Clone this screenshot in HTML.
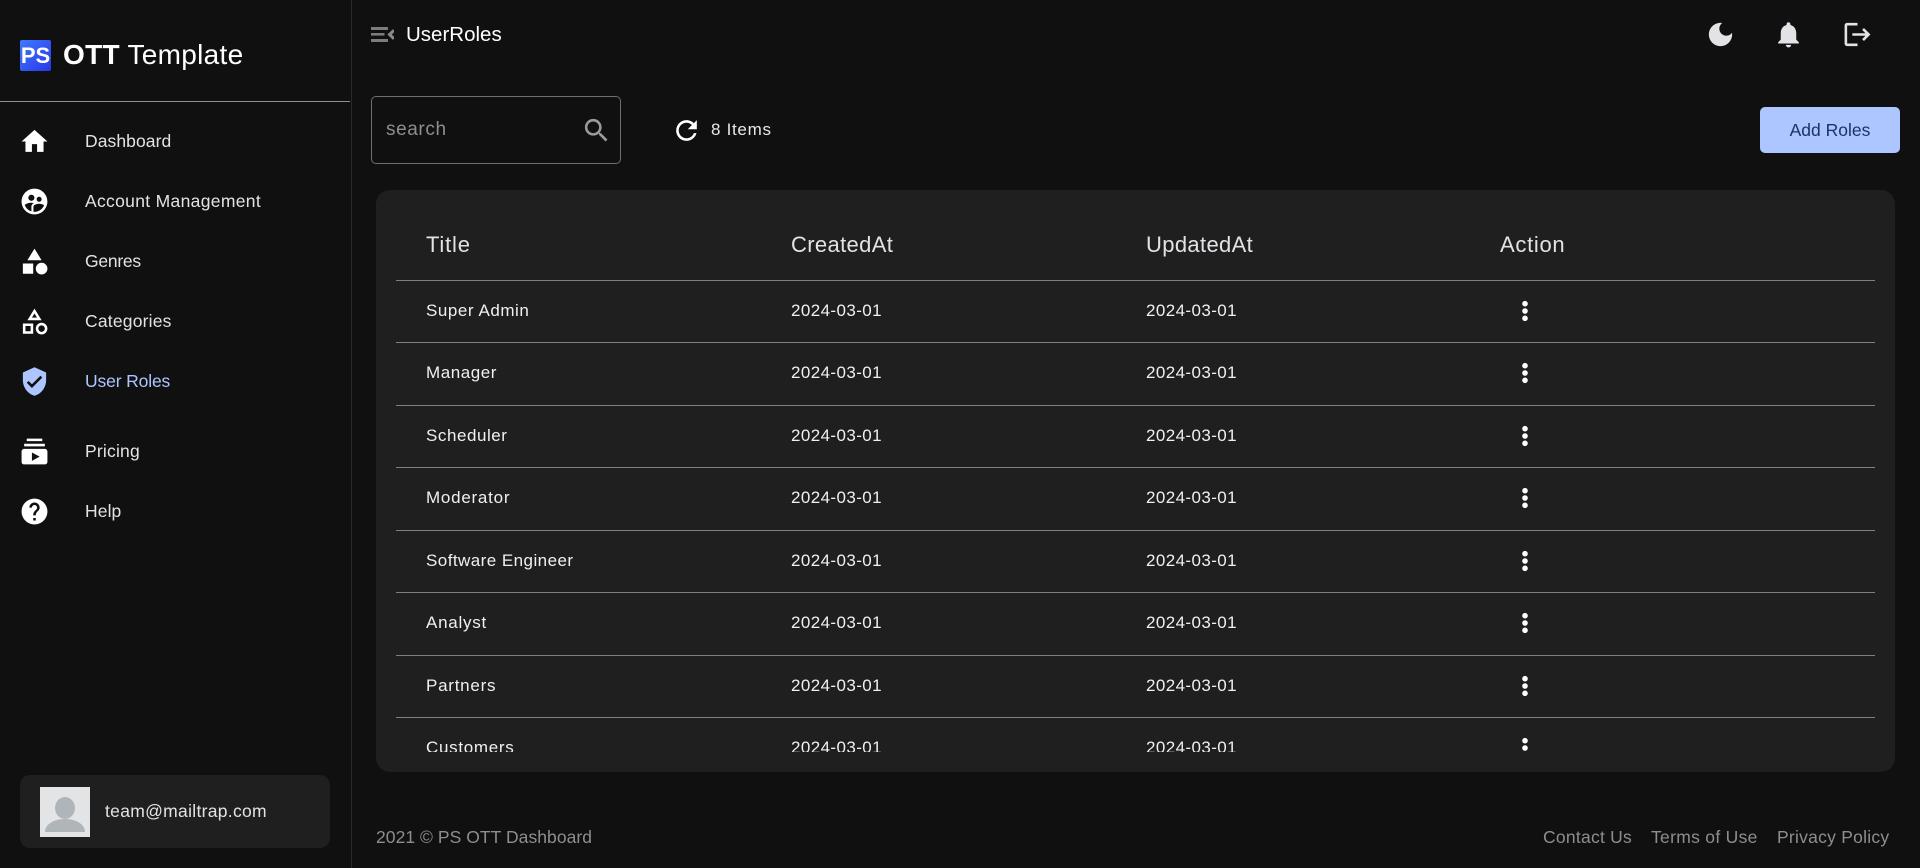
<!DOCTYPE html>
<html lang="en"><head><meta charset="utf-8"><title>UserRoles</title>
<style>
*{box-sizing:border-box}
html,body{margin:0;padding:0;width:1920px;height:868px;overflow:hidden;background:#101010;font-family:"Liberation Sans",sans-serif;color:#fff}
.a{position:absolute;white-space:nowrap}
svg{position:absolute;display:block}
.m{left:85px;font-size:17.5px;letter-spacing:.2px;line-height:24px;color:#e3e2e6}
.h{font-size:22px;letter-spacing:.35px;line-height:26px;color:#e3e2e6}
.t{font-size:17px;letter-spacing:.4px;line-height:24px;color:#f0f0f2}
.n{font-size:17px;letter-spacing:.55px;line-height:24px;color:#f0f0f2}
.l{position:absolute;left:20px;width:1479px;height:1px;background:#808084}
.f{font-size:17.5px;letter-spacing:.25px;line-height:24px;color:#8e8e8e}
</style></head><body>
<div class="a" style="left:351px;top:0;width:1px;height:868px;background:#2a2a2e"></div>

<div class="a" style="left:20px;top:40px;width:31px;height:31px;border-radius:2px;background:linear-gradient(135deg,#3f7bff,#2a35e8);color:#fff;font-weight:700;font-size:22px;line-height:31px;text-align:center">PS</div>
<div class="a" style="left:63px;top:37px;font-size:28px;letter-spacing:.3px;line-height:36px;color:#fff"><b>OTT</b> Template</div>
<div class="a" style="left:0;top:101px;width:350px;height:1px;background:#8e8e90"></div>

<svg style="left:19px;top:126px" width="31" height="31" viewBox="0 0 24 24" fill="#fff"><path d="M10 20v-6h4v6h5v-8h3L12 3 2 12h3v8z"/></svg>
<div class="a m" style="top:129px;letter-spacing:.08px">Dashboard</div>
<svg style="left:19px;top:186px" width="31" height="31" viewBox="0 0 24 24" fill="#fff"><path d="M11.99 2c-5.52 0-10 4.48-10 10s4.48 10 10 10 10-4.48 10-10-4.48-10-10-10zm3.61 6.34c1.07 0 1.93.86 1.93 1.93 0 1.07-.86 1.93-1.93 1.93-1.07 0-1.93-.86-1.93-1.93-.01-1.07.86-1.93 1.93-1.93zm-6-1.58c1.3 0 2.36 1.06 2.36 2.36 0 1.3-1.06 2.36-2.36 2.36s-2.36-1.06-2.36-2.36c0-1.31 1.05-2.36 2.36-2.36zm0 9.13v3.75c-2.4-.75-4.3-2.6-5.14-4.96 1.05-1.12 3.67-1.69 5.14-1.69.53 0 1.2.08 1.9.22-1.64.87-1.9 2.02-1.9 2.68zM11.99 20c-.27 0-.53-.01-.79-.04v-4.07c0-1.42 2.94-2.13 4.4-2.13 1.07 0 2.92.39 3.84 1.15-1.17 2.97-4.06 5.09-7.45 5.09z"/></svg>
<div class="a m" style="top:189px;letter-spacing:.32px">Account Management</div>
<svg style="left:19px;top:246px" width="31" height="31" viewBox="0 0 24 24" fill="#fff"><path d="M12 2l-5.5 9h11zM17.5 13a4.5 4.5 0 1 0 0 9 4.5 4.5 0 0 0 0-9zM3 13.5h8v8H3z"/></svg>
<div class="a m" style="top:249px;letter-spacing:-.25px">Genres</div>
<svg style="left:19px;top:306px" width="31" height="31" viewBox="0 0 24 24" fill="#fff"><path d="M12 2l-5.5 9h11L12 2zm0 3.84L13.93 9h-3.87L12 5.84zM17.5 13c-2.49 0-4.5 2.01-4.5 4.5s2.01 4.5 4.5 4.5 4.5-2.01 4.5-4.5-2.01-4.5-4.5-4.5zm0 7c-1.38 0-2.5-1.12-2.5-2.5s1.12-2.5 2.5-2.5 2.5 1.12 2.5 2.5-1.12 2.5-2.5 2.5zM3 21.5h8v-8H3v8zm2-6h4v4H5v-4z"/></svg>
<div class="a m" style="top:309px">Categories</div>
<svg style="left:19px;top:366px" width="31" height="31" viewBox="0 0 24 24" fill="#adc6ff"><path d="M12 1L3 5v6c0 5.55 3.84 10.74 9 12 5.16-1.26 9-6.45 9-12V5l-9-4z"/><path fill="#101010" d="M10 17l-4-4 1.41-1.41L10 14.17l6.59-6.59L18 9l-8 8z"/></svg>
<div class="a m" style="top:369px;color:#adc6ff;letter-spacing:-.14px">User Roles</div>
<svg style="left:19px;top:436px" width="31" height="31" viewBox="0 0 24 24" fill="#fff"><path d="M20 8H4V6h16v2zm-2-6H6v2h12V2zm4 10v8c0 1.1-.9 2-2 2H4c-1.1 0-2-.9-2-2v-8c0-1.1.9-2 2-2h16c1.1 0 2 .9 2 2zm-6 4l-6-3.27v6.53L16 16z"/></svg>
<div class="a m" style="top:439px">Pricing</div>
<svg style="left:19px;top:496px" width="31" height="31" viewBox="0 0 24 24" fill="#fff"><path d="M12 2C6.48 2 2 6.48 2 12s4.48 10 10 10 10-4.48 10-10S17.52 2 12 2zm1 17h-2v-2h2v2zm2.07-7.75l-.9.92C13.45 12.9 13 13.5 13 15h-2v-.5c0-1.1.45-2.1 1.17-2.83l1.24-1.26c.37-.36.59-.86.59-1.41 0-1.1-.9-2-2-2s-2 .9-2 2H8c0-2.21 1.79-4 4-4s4 1.79 4 4c0 .88-.36 1.68-.93 2.25z"/></svg>
<div class="a m" style="top:499px;letter-spacing:.1px">Help</div>

<div class="a" style="left:20px;top:775px;width:310px;height:73px;border-radius:10px;background:#1f1f1f"></div>
<svg style="left:40px;top:787px" width="50" height="50" viewBox="0 0 50 50"><rect width="50" height="50" fill="#e2e4e6"/><ellipse cx="25" cy="21" rx="10" ry="11" fill="#b0b5b9"/><path d="M5 45c0-7 8-13 20-13s20 6 20 13z" fill="#b0b5b9"/></svg>
<div class="a" style="left:105px;top:799px;font-size:17.5px;letter-spacing:.3px;line-height:24px;color:#e3e2e6">team@mailtrap.com</div>

<svg style="left:371px;top:27px" width="23" height="15" viewBox="0 0 23 15"><rect x="0" y="0" width="17" height="3" fill="#7c7c7c"/><rect x="0" y="6" width="13.5" height="2.6" fill="#7c7c7c"/><rect x="0" y="12" width="17" height="3" fill="#7c7c7c"/><path d="M23 3.2L18.6 7.5L23 11.8" fill="none" stroke="#8a8a8a" stroke-width="3"/></svg>
<div class="a" style="left:406px;top:22px;font-size:20.5px;line-height:26px;color:#fff">UserRoles</div>
<svg style="left:1705px;top:19px" width="31" height="31" viewBox="0 0 24 24" fill="#e3e2e6"><path d="M12 3c-4.97 0-9 4.03-9 9s4.03 9 9 9 9-4.03 9-9c0-.46-.04-.92-.1-1.36-.98 1.37-2.58 2.26-4.4 2.26-2.98 0-5.4-2.42-5.4-5.4 0-1.81.89-3.42 2.26-4.4-.44-.06-.9-.1-1.36-.1z"/></svg>
<svg style="left:1773px;top:19px" width="31" height="31" viewBox="0 0 24 24" fill="#e3e2e6"><path d="M12 22c1.1 0 2-.9 2-2h-4c0 1.1.89 2 2 2zm6-6v-5c0-3.07-1.64-5.64-4.5-6.32V4c0-.83-.67-1.5-1.5-1.5s-1.5.67-1.5 1.5v.68C7.63 5.36 6 7.92 6 11v5l-2 2v1h16v-1l-2-2z"/></svg>
<svg style="left:1842px;top:19px" width="31" height="31" viewBox="0 0 24 24" fill="#e3e2e6"><path d="M17 7l-1.41 1.41L18.17 11H8v2h10.17l-2.58 2.58L17 17l5-5zM4 5h8V3H4c-1.1 0-2 .9-2 2v14c0 1.1.9 2 2 2h8v-2H4V5z"/></svg>

<div class="a" style="left:371px;top:96px;width:250px;height:68px;border:1px solid #6e6e6e;border-radius:5px"></div>
<div class="a" style="left:386px;top:118px;font-size:19px;letter-spacing:.6px;line-height:24px;color:#8e8e8e">search</div>
<svg style="left:581px;top:115px" width="31" height="31" viewBox="0 0 24 24" fill="#9a9a9a"><path d="M15.5 14h-.79l-.28-.27C15.41 12.59 16 11.11 16 9.5 16 5.91 13.09 3 9.5 3S3 5.91 3 9.5 5.91 16 9.5 16c1.61 0 3.09-.59 4.23-1.57l.27.28v.79l5 4.99L20.49 19l-4.99-5zm-6 0C7.01 14 5 11.99 5 9.5S7.01 5 9.5 5 14 7.01 14 9.5 11.99 14 9.5 14z"/></svg>
<svg style="left:671px;top:115px" width="31" height="31" viewBox="0 0 24 24" fill="#fff"><path d="M17.65 6.35C16.2 4.9 14.21 4 12 4c-4.42 0-7.99 3.58-7.99 8s3.57 8 7.99 8c3.73 0 6.84-2.55 7.73-6h-2.08c-.82 2.33-3.04 4-5.65 4-3.31 0-6-2.69-6-6s2.69-6 6-6c1.66 0 3.14.69 4.22 1.78L13 11h7V4l-2.35 2.35z"/></svg>
<div class="a" style="left:711px;top:118px;font-size:17px;letter-spacing:.7px;line-height:24px;color:#e8e8ea">8 Items</div>
<div class="a" style="left:1760px;top:107px;width:140px;height:46px;border-radius:5px;background:#adc6ff;color:#1f3266;font-size:17.5px;line-height:46px;text-align:center">Add Roles</div>

<div class="a" style="left:376px;top:190px;width:1519px;height:582px;border-radius:14px;background:#1f1f1f;overflow:hidden">
  <div class="a h" style="left:50px;top:42px;letter-spacing:.8px">Title</div>
  <div class="a h" style="left:415px;top:42px">CreatedAt</div>
  <div class="a h" style="left:770px;top:42px">UpdatedAt</div>
  <div class="a h" style="left:1124px;top:42px;letter-spacing:.7px">Action</div>
  <div class="l" style="top:90px"></div><div class="l" style="top:152px"></div><div class="l" style="top:215px"></div><div class="l" style="top:277px"></div><div class="l" style="top:340px"></div><div class="l" style="top:402px"></div><div class="l" style="top:465px"></div><div class="l" style="top:527px"></div>
  <div class="a" style="left:0;top:0;width:1519px;height:562px;overflow:hidden">
    <div class="a n" style="left:50px;top:109px">Super Admin</div><div class="a t" style="left:415px;top:109px">2024-03-01</div><div class="a t" style="left:770px;top:109px">2024-03-01</div>
    <div class="a n" style="left:50px;top:171px">Manager</div><div class="a t" style="left:415px;top:171px">2024-03-01</div><div class="a t" style="left:770px;top:171px">2024-03-01</div>
    <div class="a n" style="left:50px;top:234px">Scheduler</div><div class="a t" style="left:415px;top:234px">2024-03-01</div><div class="a t" style="left:770px;top:234px">2024-03-01</div>
    <div class="a n" style="left:50px;top:296px;letter-spacing:.75px">Moderator</div><div class="a t" style="left:415px;top:296px">2024-03-01</div><div class="a t" style="left:770px;top:296px">2024-03-01</div>
    <div class="a n" style="left:50px;top:359px;letter-spacing:.45px">Software Engineer</div><div class="a t" style="left:415px;top:359px">2024-03-01</div><div class="a t" style="left:770px;top:359px">2024-03-01</div>
    <div class="a n" style="left:50px;top:421px;letter-spacing:.75px">Analyst</div><div class="a t" style="left:415px;top:421px">2024-03-01</div><div class="a t" style="left:770px;top:421px">2024-03-01</div>
    <div class="a n" style="left:50px;top:484px;letter-spacing:.75px">Partners</div><div class="a t" style="left:415px;top:484px">2024-03-01</div><div class="a t" style="left:770px;top:484px">2024-03-01</div>
    <div class="a n" style="left:50px;top:546px;letter-spacing:.7px">Customers</div><div class="a t" style="left:415px;top:546px">2024-03-01</div><div class="a t" style="left:770px;top:546px">2024-03-01</div>
    <svg style="left:1140px;top:107px" width="18" height="460" viewBox="0 0 18 460" fill="#fff">
      <g><circle cx="9" cy="6.7" r="2.8"/><circle cx="9" cy="14" r="2.8"/><circle cx="9" cy="21.3" r="2.8"/></g>
      <g transform="translate(0 62)"><circle cx="9" cy="6.7" r="2.8"/><circle cx="9" cy="14" r="2.8"/><circle cx="9" cy="21.3" r="2.8"/></g>
      <g transform="translate(0 125)"><circle cx="9" cy="6.7" r="2.8"/><circle cx="9" cy="14" r="2.8"/><circle cx="9" cy="21.3" r="2.8"/></g>
      <g transform="translate(0 187)"><circle cx="9" cy="6.7" r="2.8"/><circle cx="9" cy="14" r="2.8"/><circle cx="9" cy="21.3" r="2.8"/></g>
      <g transform="translate(0 250)"><circle cx="9" cy="6.7" r="2.8"/><circle cx="9" cy="14" r="2.8"/><circle cx="9" cy="21.3" r="2.8"/></g>
      <g transform="translate(0 312)"><circle cx="9" cy="6.7" r="2.8"/><circle cx="9" cy="14" r="2.8"/><circle cx="9" cy="21.3" r="2.8"/></g>
      <g transform="translate(0 375)"><circle cx="9" cy="6.7" r="2.8"/><circle cx="9" cy="14" r="2.8"/><circle cx="9" cy="21.3" r="2.8"/></g>
      <g transform="translate(0 437)"><circle cx="9" cy="6.7" r="2.8"/><circle cx="9" cy="14" r="2.8"/></g>
    </svg>
  </div>
</div>

<div class="a f" style="left:376px;top:825px;letter-spacing:.05px">2021 © PS OTT Dashboard</div>
<div class="a f" style="left:1543px;top:825px">Contact Us</div>
<div class="a f" style="left:1651px;top:825px;letter-spacing:.3px">Terms of Use</div>
<div class="a f" style="left:1777px;top:825px">Privacy Policy</div>
</body></html>
